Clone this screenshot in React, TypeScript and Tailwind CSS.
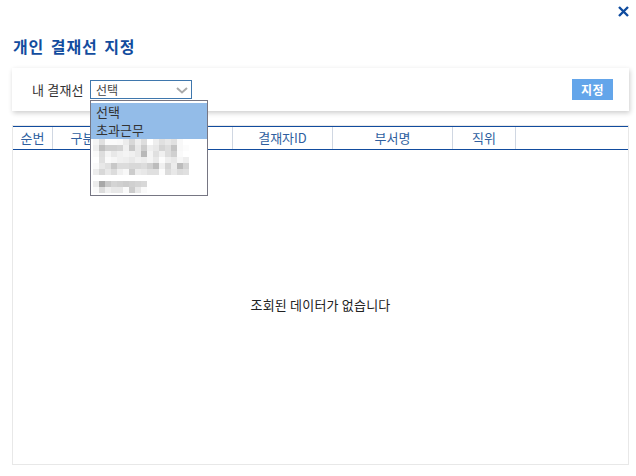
const F = "font-['Noto_Sans_CJK_KR','Noto_Sans',sans-serif]";
const cols = [
  { w: 'w-[40px]', t: '순번' },
  { w: 'w-[60px]', t: '구분' },
  { w: 'w-[120px]', t: '' },
  { w: 'w-[100px]', t: '결재자ID' },
  { w: 'w-[120px]', t: '부서명' },
  { w: 'w-[63px]', t: '직위' },
];
const mosaic: [number, string[]][] = [
  [0, ['f4', 'e0', 'fa', 'fa', 'f8', 'ec', 'd8', 'ee', 'dd', 'ff', 'ee', 'e0', 'e8', 'e0', 'f8']],
  [6, ['ee', 'c0', 'd0', 'd0', 'd4', 'f0', 'c8', 'e8', 'cc', 'ee', 'e8', 'd4', 'dd', 'c4', 'f8', 'fc']],
  [12, ['fa', 'dd', 'f4', 'e8', 'f0', 'f4', 'f0', 'e8', 'b8', 'f4', 'e0', 'f0', 'dd', 'd0', 'fa']],
  [18, ['ff', 'e0', 'fa', 'f6', 'f0', 'ee', 'e8', 'f0', 'ec', 'f4', 'e8', 'fc', 'ee', 'e8', 'f6', 'ee']],
  [24, ['fa', 'e8', 'e0', 'c8', 'dc', 'dc', 'd8', 'd8', 'dc', 'd0', 'bc', 'f0', 'd4', 'ec', 'bc', 'd4']],
  [30, ['ec', 'd8', 'e8', 'dc', 'f0', 'f8', 'cc', 'ec', 'e8', 'e0', 'e0', 'fc', 'dc', 'e8', 'dc', 'e0']],
  [42, ['ec', 'a8', 'c8', 'd4', 'd0', 'cc', 'd0', 'd4', 'd8']],
  [48, ['fa', 'dc', 'f0', 'e8', 'e8', 'fa', 'cc', 'e8', 'fa']],
];
export default function App() {
  return (
    <div className={`relative w-[636px] h-[476px] bg-white overflow-hidden ${F}`}>
      <div className="flex justify-end pt-[4px] pr-[7px] h-[36px]">
        <svg width="11" height="11" viewBox="0 0 11 11" className="mt-[2px]"><path d="M1 1 L10 10 M10 1 L1 10" stroke="#0f4c9f" strokeWidth="2.4" /></svg>
      </div>
      <h1 className="ml-[13px] h-[32px] text-[16px] leading-[20px] font-bold text-[#124c9e] tracking-[0.9px] [word-spacing:2px]">개인 결재선 지정</h1>
      <div className="mx-[12px] w-[617px] h-[43px] pl-[20px] pr-[16px] flex items-center shadow-[1px_2px_5px_rgba(0,0,0,0.2)] bg-white">
        <span className="w-[58px] text-[13px] text-[#333] tracking-[0.2px]">내 결재선</span>
        <div className="relative w-[102px] h-[19px] border border-[#3f77ad] flex items-center pl-[5px]">
          <span className="text-[12px] text-[#444]">선택</span>
          <svg width="12" height="7" viewBox="0 0 12 7" className="absolute right-[3px] top-[6px]"><path d="M1 1 L6 5.5 L11 1" fill="none" stroke="#aaaaaa" strokeWidth="2" /></svg>
        </div>
        <button className="ml-auto w-[41px] h-[21px] bg-[#63a5ea] text-white text-[12px] font-bold tracking-[0.5px]">지정</button>
      </div>
      <div className="mt-[14px] mx-[12px] w-[617px] h-[340px] border border-[#e8e8e8] flex flex-col">
        <div className="flex h-[24px] border-y border-[#124c9e] shrink-0">
          {cols.map((c, i) => (
            <div key={i} className={`${c.w} shrink-0 border-r border-[#d0d7e2] flex items-center justify-center text-[13px] text-[#2f5f9f]`}>{c.t}</div>
          ))}
        </div>
        <div className="flex-1 flex items-center justify-center text-[13px] text-[#222] tracking-[0.2px] pb-[5px]">조회된 데이터가 없습니다</div>
      </div>
      <div className="absolute left-[90px] top-[100px] w-[118px] h-[96px] border border-[#767683] bg-white pt-[2px]">
        <div className="bg-[#93bce8] text-[13px] leading-[18px] text-[#333] pl-[5px] h-[18px]">선택</div>
        <div className="bg-[#93bce8] text-[13px] leading-[18px] text-[#333] pl-[5px] h-[18px]">초과근무</div>
        <svg width="116" height="54" viewBox="0 0 116 54" className="block">
          {mosaic.map(([y, cells]) =>
            cells.map((c, i) => <rect key={`${y}-${i}`} x={2 + i * 6} y={y} width="6" height="6" fill={`#${c}${c}${c}`} />),
          )}
        </svg>
      </div>
    </div>
  );
}
